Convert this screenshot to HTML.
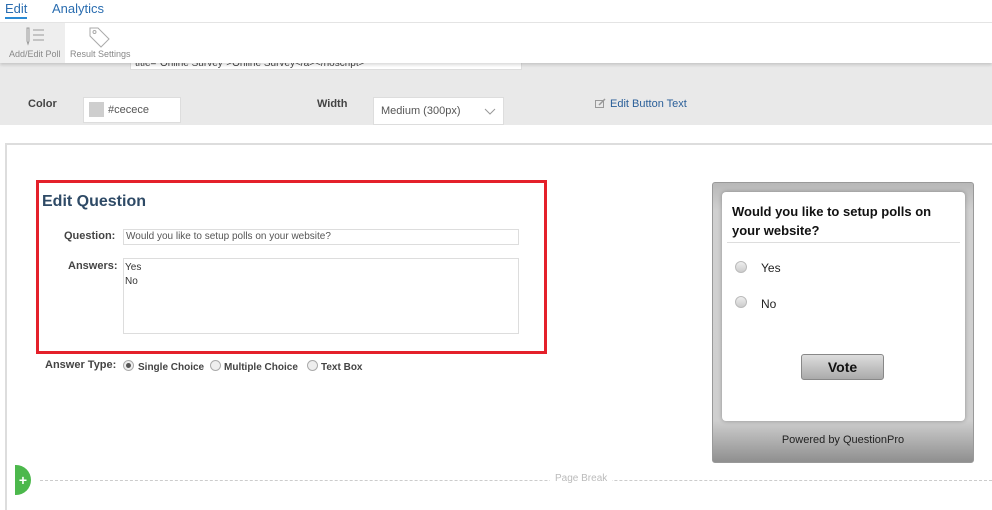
<!DOCTYPE html>
<html><head><meta charset="utf-8"><style>
*{box-sizing:border-box;margin:0;padding:0}
body{width:992px;height:510px;overflow:hidden;background:#fff;font-family:"Liberation Sans",sans-serif;position:relative}
.a{position:absolute}
</style></head><body>
<div class="a" style="left:5px;top:1px;font-size:13px;color:#2a6db0;">Edit</div>
<div class="a" style="left:5px;top:17px;width:22px;height:2px;background:#2a8ad4"></div>
<div class="a" style="left:52px;top:1px;font-size:13px;color:#2a6db0;">Analytics</div>
<div class="a" style="left:0;top:22px;width:992px;height:1px;background:#e6e6e6"></div>
<div class="a" style="left:0;top:63px;width:992px;height:62px;background:#e9e9e9"></div>
<div class="a" style="left:130px;top:58px;width:392px;height:12px;background:#fff;border:1px solid #ddd;font-size:10px;color:#444;line-height:10px;padding-left:4px;overflow:hidden">title="Online Survey"&gt;Online Survey&lt;/a&gt;&lt;/noscript&gt;</div>
<div class="a" style="left:28px;top:98px;font-size:11px;font-weight:bold;color:#444">Color</div>
<div class="a" style="left:83px;top:97px;width:98px;height:26px;background:#fff;border:1px solid #ddd"></div>
<div class="a" style="left:89px;top:102px;width:15px;height:15px;background:#cecece"></div>
<div class="a" style="left:108px;top:104px;font-size:11px;color:#555">#cecece</div>
<div class="a" style="left:317px;top:98px;font-size:11px;font-weight:bold;color:#444">Width</div>
<div class="a" style="left:373px;top:97px;width:131px;height:28px;background:#fff;border:1px solid #ddd"></div>
<div class="a" style="left:381px;top:105px;font-size:11px;color:#555">Medium (300px)</div>
<svg class="a" style="left:484px;top:108px" width="12" height="8"><path d="M1 1l5 5 5-5" stroke="#999" fill="none"/></svg>
<svg class="a" style="left:595px;top:98px" width="12" height="10"><rect x="0.5" y="2.5" width="8" height="7" fill="none" stroke="#999"/><path d="M4 7l6-6" stroke="#999" stroke-width="1.5"/></svg>
<div class="a" style="left:610px;top:98px;font-size:11px;color:#2a5f99">Edit Button Text</div>
<div class="a" style="left:0;top:23px;width:992px;height:40px;background:#fff;box-shadow:0 2px 3px rgba(0,0,0,.15)"></div>
<div class="a" style="left:0;top:23px;width:65px;height:40px;background:#eee"></div>
<svg class="a" style="left:24px;top:26px" width="24" height="20"><path d="M3 2v13l1 3 1-3V2z" fill="none" stroke="#999"/><path d="M9 4h11M9 9h11M9 14h11" stroke="#999"/></svg>
<div class="a" style="left:9px;top:49px;font-size:9px;color:#888">Add/Edit Poll</div>
<svg class="a" style="left:88px;top:26px" width="24" height="22"><path d="M2 2h8l11 11-8 8L2 10z" fill="none" stroke="#aaa"/><circle cx="6.5" cy="6" r="1.5" fill="none" stroke="#aaa"/></svg>
<div class="a" style="left:70px;top:49px;font-size:9px;color:#888">Result Settings</div>
<div class="a" style="left:5px;top:143px;width:987px;height:2px;background:#ddd"></div>
<div class="a" style="left:5px;top:143px;width:2px;height:367px;background:#ddd"></div>
<div class="a" style="left:36px;top:180px;width:511px;height:174px;border:3px solid #e4202a"></div>
<div class="a" style="left:42px;top:193px;font-size:16px;font-weight:bold;color:#2e4a66">Edit Question</div>
<div class="a" style="left:64px;top:230px;font-size:11px;font-weight:bold;color:#444">Question:</div>
<div class="a" style="left:123px;top:229px;width:396px;height:16px;border:1px solid #ddd;font-size:10px;color:#555;padding:1px 2px">Would you like to setup polls on your website?</div>
<div class="a" style="left:68px;top:260px;font-size:11px;font-weight:bold;color:#444">Answers:</div>
<div class="a" style="left:123px;top:258px;width:396px;height:76px;border:1px solid #ddd;font-size:10px;color:#333;padding:2px 1px;line-height:14px">Yes<br>No</div>
<div class="a" style="left:45px;top:359px;font-size:11px;font-weight:bold;color:#444">Answer Type:</div>
<div class="a" style="left:123px;top:360px;width:11px;height:11px;border-radius:50%;border:1px solid #aaa;background:#eee"><div style="margin:2px;width:5px;height:5px;border-radius:50%;background:#555"></div></div>
<div class="a" style="left:138px;top:362px;font-size:10px;font-weight:bold;color:#444">Single Choice</div>
<div class="a" style="left:210px;top:360px;width:11px;height:11px;border-radius:50%;border:1px solid #aaa;background:#eee"></div>
<div class="a" style="left:224px;top:362px;font-size:10px;font-weight:bold;color:#444">Multiple Choice</div>
<div class="a" style="left:307px;top:360px;width:11px;height:11px;border-radius:50%;border:1px solid #aaa;background:#eee"></div>
<div class="a" style="left:321px;top:362px;font-size:10px;font-weight:bold;color:#444">Text Box</div>
<div class="a" style="left:712px;top:182px;width:262px;height:281px;border-radius:3px;background:linear-gradient(#b8b8b8,#d0d0d0 10%,#cfcfcf 85%,#8f8f8f);border:1px solid #999"></div>
<div class="a" style="left:722px;top:192px;width:243px;height:229px;background:#fff;border-radius:4px;box-shadow:0 0 4px rgba(0,0,0,.3)"></div>
<div class="a" style="left:732px;top:202px;width:225px;font-size:13px;font-weight:bold;color:#111;line-height:19px">Would you like to setup polls on your website?</div>
<div class="a" style="left:727px;top:242px;width:233px;height:1px;background:#ddd"></div>
<div class="a" style="left:735px;top:261px;width:12px;height:12px;border-radius:50%;border:1px solid #bbb;background:linear-gradient(#eee,#ccc)"></div>
<div class="a" style="left:761px;top:261px;font-size:12px;color:#222">Yes</div>
<div class="a" style="left:735px;top:296px;width:12px;height:12px;border-radius:50%;border:1px solid #bbb;background:linear-gradient(#eee,#ccc)"></div>
<div class="a" style="left:761px;top:297px;font-size:12px;color:#222">No</div>
<div class="a" style="left:801px;top:354px;width:83px;height:26px;border:1px solid #888;border-radius:3px;background:linear-gradient(#ddd,#aaa);font-size:14px;font-weight:bold;text-align:center;line-height:24px;color:#111">Vote</div>
<div class="a" style="left:712px;top:434px;width:262px;text-align:center;font-size:11px;color:#222">Powered by QuestionPro</div>
<div class="a" style="left:40px;top:480px;width:952px;border-top:1px dashed #ccc"></div>
<div class="a" style="left:550px;top:473px;background:#fff;padding:0 5px;font-size:10px;color:#bbb">Page Break</div>
<div class="a" style="left:15px;top:465px;width:16px;height:30px;border-radius:0 15px 15px 0;background:#4cb84c;color:#fff;font-weight:bold;font-size:14px;line-height:30px;text-align:center">+</div>
</body></html>
